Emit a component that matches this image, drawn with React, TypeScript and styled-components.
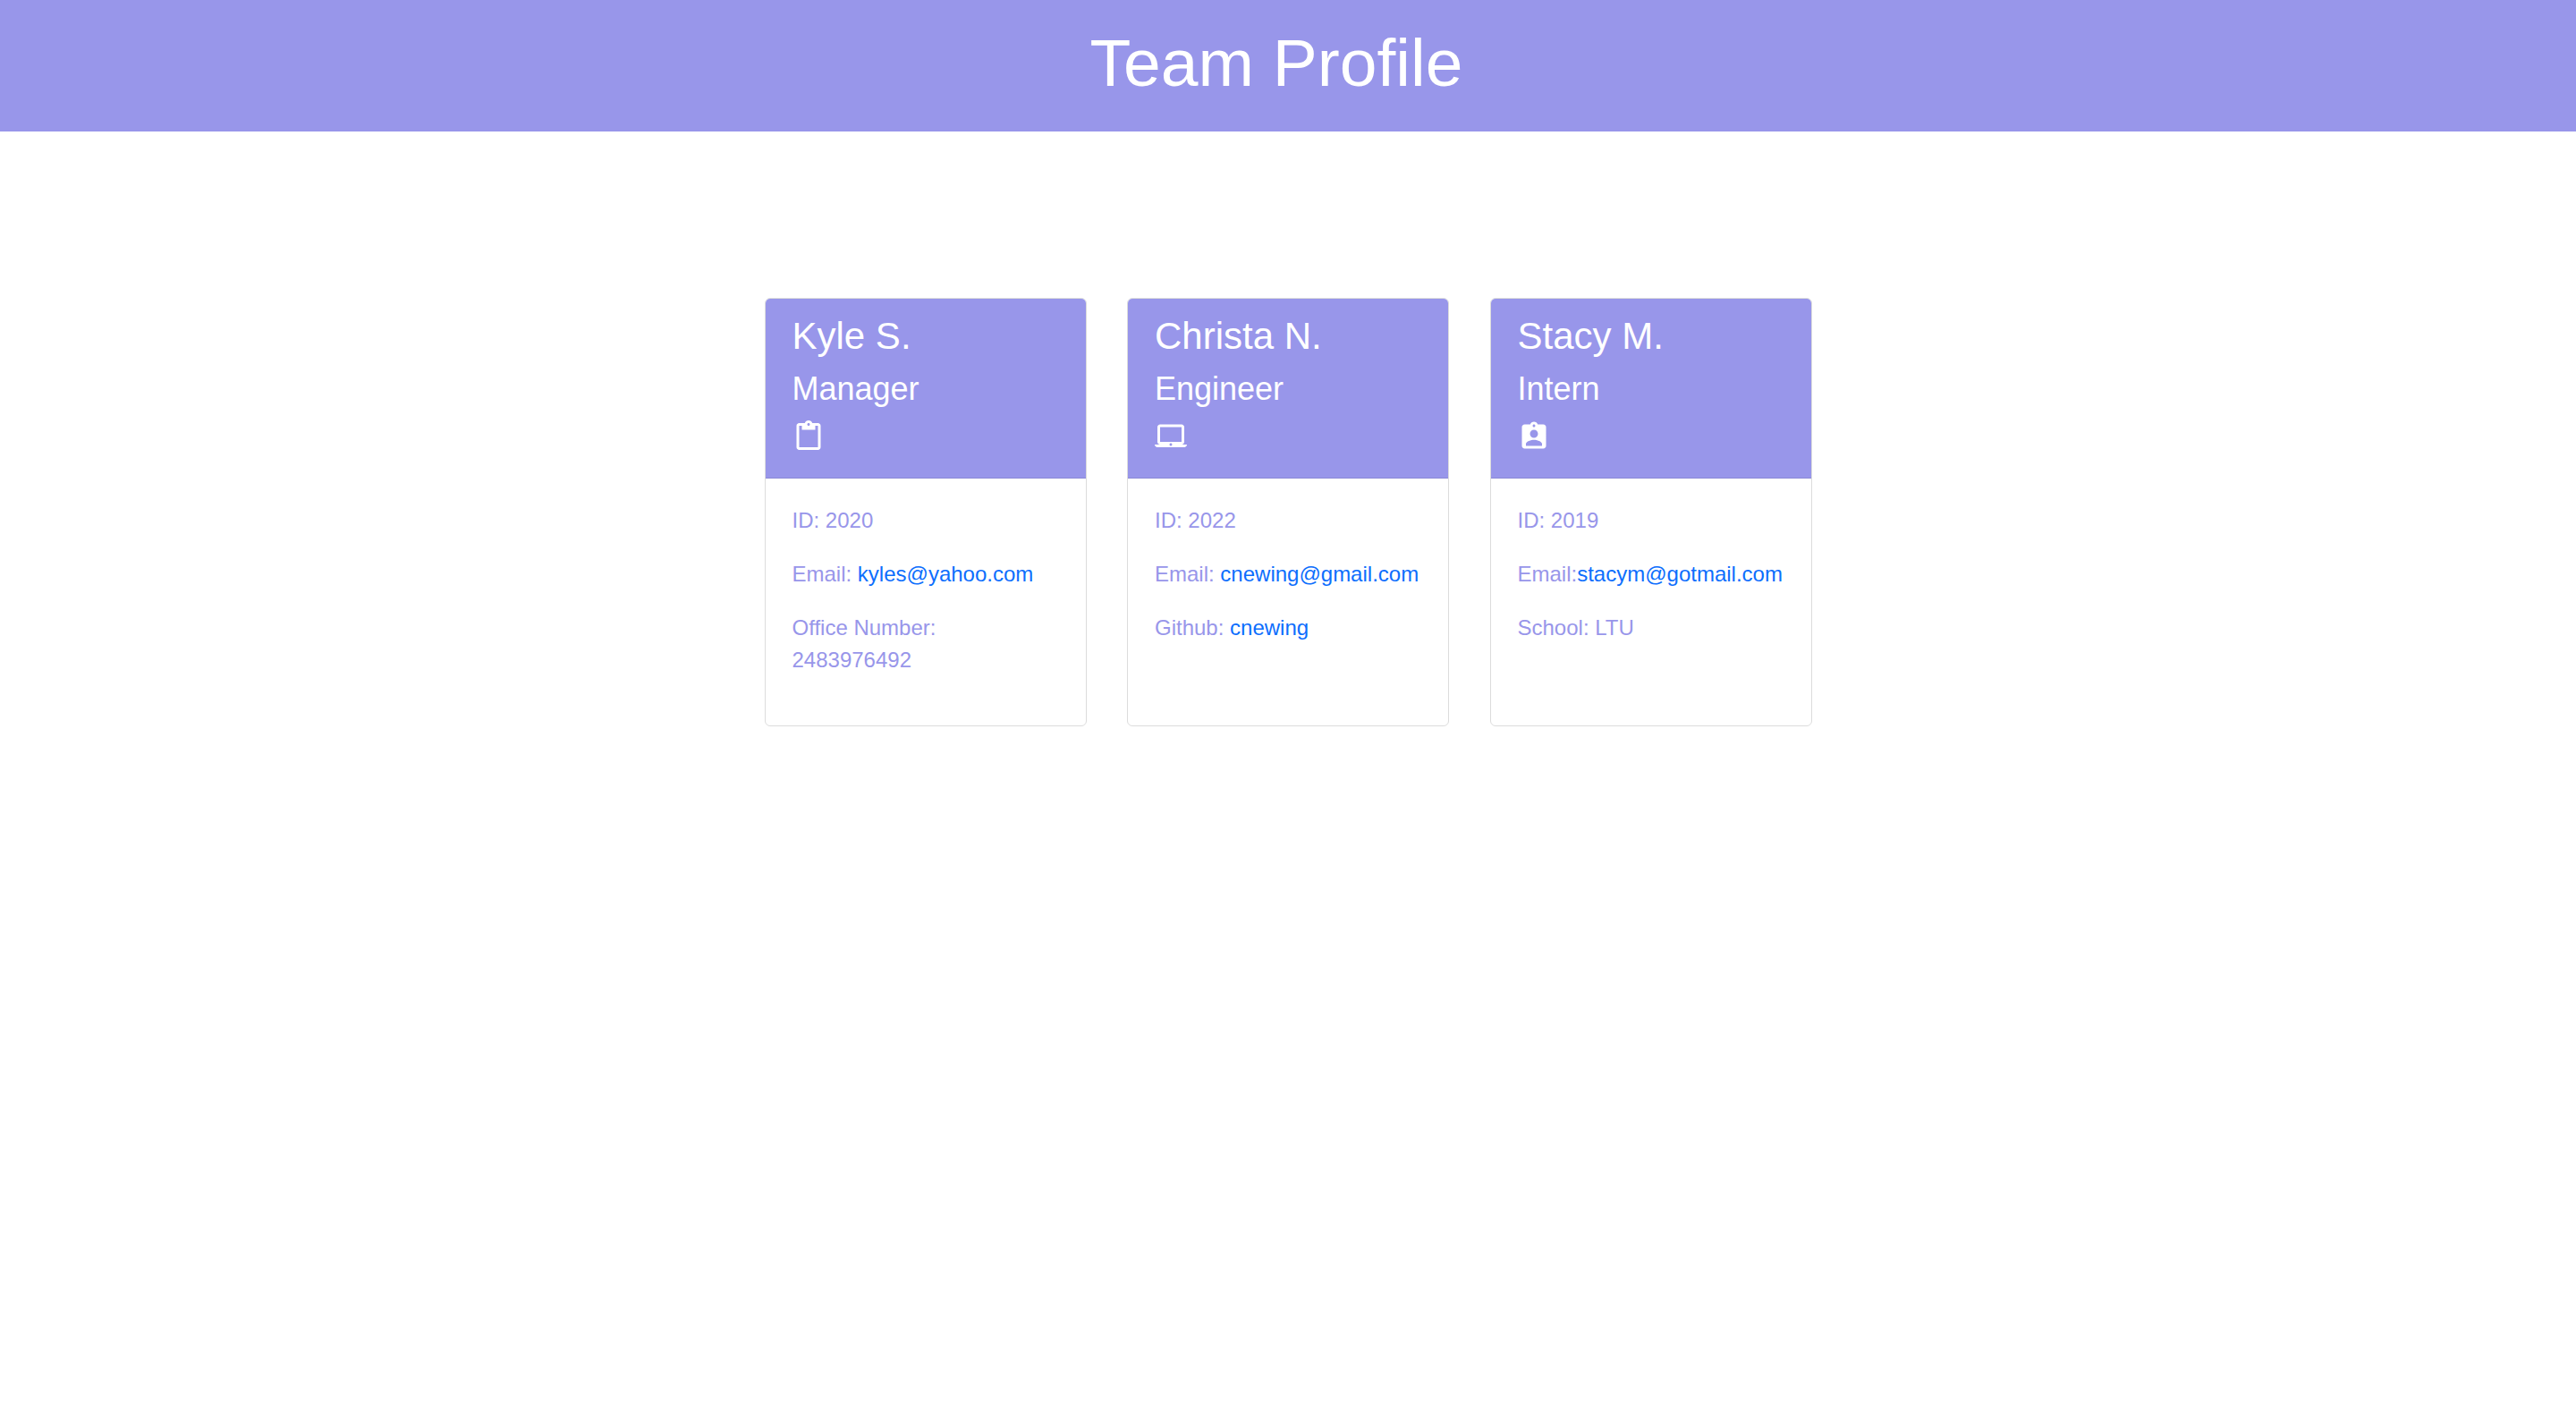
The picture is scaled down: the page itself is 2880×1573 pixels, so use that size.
import styled, { createGlobalStyle } from "styled-components";

const GlobalStyle = createGlobalStyle`
  html, body {
    margin: 0;
    padding: 0;
    background: #fff;
    font-family: "Liberation Sans", Arial, sans-serif;
    font-size: 24px;
    line-height: 36px;
  }
  * {
    box-sizing: border-box;
  }
`

const PURPLE = "#9896ea"

const Banner = styled.header`
  height: 147px;
  padding: 30px 26px 0 0;
  background-color: ${PURPLE};
  text-align: center;
`
const Title = styled.h1`
  margin: 0;
  font-size: 75px;
  line-height: 80px;
  font-weight: 400;
  color: #fff;
`
const CardRow = styled.main`
  display: flex;
  justify-content: center;
  gap: 45.5px;
  padding-top: 186px;
`
const Card = styled.article`
  width: 360px;
  height: 479px;
  display: flex;
  flex-direction: column;
  background: #fff;
  border: 1.5px solid #dcdcdc;
  border-radius: 6px;
  overflow: hidden;
`
const CardHeader = styled.div`
  height: 201px;
  padding: 17px 30px 0;
  background-color: ${PURPLE};
  border-bottom: 1px solid #8a88d6;
  color: #fff;
`
const Name = styled.h4`
  margin: 0 0 12px;
  font-size: 42px;
  line-height: 50px;
  font-weight: 400;
`
const Role = styled.h5`
  margin: 0 0 14px;
  font-size: 36px;
  line-height: 43px;
  font-weight: 400;
`
const RoleIcon = styled.svg`
  display: block;
  width: 36px;
  height: 36px;
  fill: #fff;
`
const CardBody = styled.div`
  flex: 1;
  padding: 29px 30px 30px;
`
const Detail = styled.p`
  margin: 0 0 24px;
  color: ${PURPLE};
`
const DetailLink = styled.a`
  color: #0d6efd;
  text-decoration: none;
`

const icons = {
  clipboard: "M19 2h-4.18C14.4.84 13.3 0 12 0S9.6.84 9.18 2H5c-1.1 0-2 .9-2 2v16c0 1.1.9 2 2 2h14c1.1 0 2-.9 2-2V4c0-1.1-.9-2-2-2zm-7 0c.55 0 1 .45 1 1s-.45 1-1 1-1-.45-1-1 .45-1 1-1zm7 18H5V4h2v3h10V4h2v16z",
  laptop: "M20 18c1.1 0 1.99-.9 1.99-2L22 5c0-1.1-.9-2-2-2H4c-1.1 0-2 .9-2 2v11c0 1.1.9 2 2 2H0c0 1.1.9 2 2 2h20c1.1 0 2-.9 2-2h-4zM4 5h16v11H4V5zm8 14c-.55 0-1-.45-1-1s.45-1 1-1 1 .45 1 1-.45 1-1 1z",
  badge: "M19 3h-4.18C14.4 1.84 13.3 1 12 1c-1.3 0-2.4.84-2.82 2H5c-1.1 0-2 .9-2 2v14c0 1.1.9 2 2 2h14c1.1 0 2-.9 2-2V5c0-1.1-.9-2-2-2zm-7 0c.55 0 1 .45 1 1s-.45 1-1 1-1-.45-1-1 .45-1 1-1zm0 4c1.66 0 3 1.34 3 3s-1.34 3-3 3-3-1.34-3-3 1.34-3 3-3zm6 12H6v-1.4c0-2 4-3.1 6-3.1s6 1.1 6 3.1V19z",
}

const App = () => {
  return <>
    <GlobalStyle />
    <Banner>
      <Title>Team Profile</Title>
    </Banner>
    <CardRow>
      <Card>
        <CardHeader>
          <Name>Kyle S.</Name>
          <Role>Manager</Role>
          <RoleIcon viewBox="0 0 24 24"><path d={icons.clipboard} /></RoleIcon>
        </CardHeader>
        <CardBody>
          <Detail>ID: 2020</Detail>
          <Detail>Email: <DetailLink href="#">kyles@yahoo.com</DetailLink></Detail>
          <Detail>Office Number: 2483976492</Detail>
        </CardBody>
      </Card>
      <Card>
        <CardHeader>
          <Name>Christa N.</Name>
          <Role>Engineer</Role>
          <RoleIcon viewBox="0 0 24 24"><path d={icons.laptop} /></RoleIcon>
        </CardHeader>
        <CardBody>
          <Detail>ID: 2022</Detail>
          <Detail>Email: <DetailLink href="#">cnewing@gmail.com</DetailLink></Detail>
          <Detail>Github: <DetailLink href="#">cnewing</DetailLink></Detail>
        </CardBody>
      </Card>
      <Card>
        <CardHeader>
          <Name>Stacy M.</Name>
          <Role>Intern</Role>
          <RoleIcon viewBox="0 0 24 24"><path d={icons.badge} /></RoleIcon>
        </CardHeader>
        <CardBody>
          <Detail>ID: 2019</Detail>
          <Detail>Email:<DetailLink href="#">stacym@gotmail.com</DetailLink></Detail>
          <Detail>School: LTU</Detail>
        </CardBody>
      </Card>
    </CardRow>
  </>
}

export default App;
